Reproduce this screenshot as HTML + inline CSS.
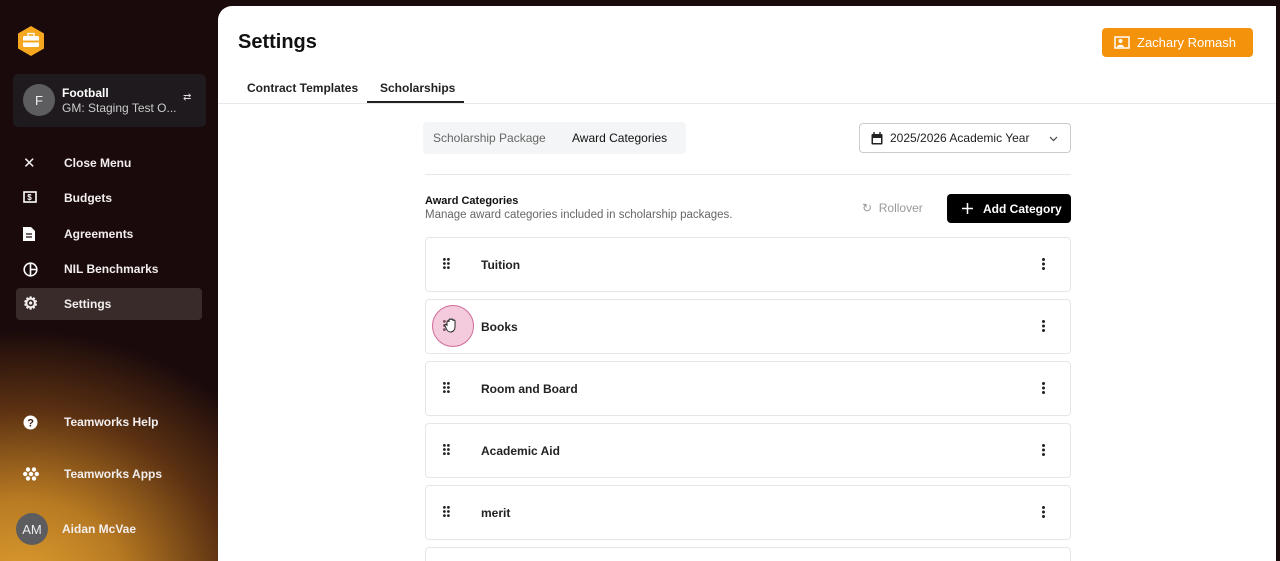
<!DOCTYPE html>
<html style="overflow:hidden;width:1280px;height:561px"><head><style>
*{box-sizing:border-box;margin:0;padding:0}
body{width:1280px;height:561px;overflow:hidden;font-family:"Liberation Sans",sans-serif;background:#1a0a0b;position:relative}
.side{position:absolute;left:0;top:0;width:218px;height:561px;background:radial-gradient(ellipse 300px 260px at 20px 590px,#e0a030 0%,#b87a22 35%,#5a3012 70%,rgba(26,10,11,0) 100%),#1a0a0b;color:#fff}
.logo{position:absolute;left:17px;top:26px}
.team{position:absolute;left:13px;top:74px;width:193px;height:53px;background:#1f1a1d;border-radius:5px}
.av{position:absolute;border-radius:50%;background:#5d5d60;color:#eee;display:flex;align-items:center;justify-content:center}
.nav{position:absolute;left:0;font-size:12px;font-weight:bold;color:#f2eeee}
.nav span.ic{position:absolute;left:23px;width:16px;height:16px}
.nav span.t{position:absolute;left:64px;top:0;white-space:nowrap}
.main{position:absolute;left:218px;top:6px;width:1058px;height:555px;background:#fff;border-radius:14px 0 0 0}
.card{position:absolute;left:425px;width:646px;height:55px;border:1px solid #e6e6e6;border-radius:4px;background:#fff}
.card .t{position:absolute;left:55px;top:20px;font-size:12px;font-weight:bold;color:#222}
.dots{position:absolute;left:17px;top:20px}
.kebab{position:absolute;right:25px;top:20px}
</style></head><body>
<div class="side">
 <svg class="logo" width="28" height="30" viewBox="0 0 28 30"><polygon points="14,0 27,7.5 27,22.5 14,30 1,22.5 1,7.5" fill="#f5a81f"/><rect x="6" y="10" width="16" height="11" rx="1.5" fill="#fff"/><rect x="6" y="14.5" width="16" height="2" fill="#f5a81f"/><rect x="11" y="7.5" width="6" height="3" fill="none" stroke="#fff" stroke-width="1.3"/></svg>
 <div class="team"><div class="av" style="left:10px;top:10px;width:32px;height:32px;font-size:13px">F</div>
  <div style="position:absolute;left:49px;top:12px;font-size:12px;font-weight:bold">Football</div>
  <div style="position:absolute;left:49px;top:27px;font-size:12px;color:#ccc">GM: Staging Test O...</div>
  <div style="position:absolute;left:170px;top:18px;font-size:10px;color:#ddd">⇄</div></div>
 <div class="nav" style="top:156px"><span class="ic" style="top:-2px;font-size:15px;font-weight:normal">✕</span><span class="t">Close Menu</span></div>
 <div class="nav" style="top:191px"><span class="ic"><svg width="14" height="12"><rect x="1" y="1" width="12" height="10" fill="none" stroke="#fff" stroke-width="1.6"/><text x="4.3" y="9.2" font-size="8" fill="#fff" font-family="Liberation Sans">$</text></svg></span><span class="t">Budgets</span></div>
 <div class="nav" style="top:227px"><span class="ic"><svg width="12" height="14"><path d="M0 0h8l4 4v10H0z" fill="#fff"/><path d="M3 7h6M3 10h6" stroke="#1a0a0b" stroke-width="1.3"/></svg></span><span class="t">Agreements</span></div>
 <div class="nav" style="top:262px"><span class="ic"><svg width="15" height="15"><circle cx="7.5" cy="7.5" r="6.3" fill="none" stroke="#fff" stroke-width="1.6"/><path d="M7.5 1v13M7.5 7.5h6" stroke="#fff" stroke-width="1.6"/></svg></span><span class="t">NIL Benchmarks</span></div>
 <div style="position:absolute;left:16px;top:288px;width:186px;height:32px;background:#3a2b2b;border-radius:4px"></div>
 <div class="nav" style="top:297px"><span class="ic" style="top:-3px;font-size:17px">⚙</span><span class="t">Settings</span></div>
 <div class="nav" style="top:415px"><span class="ic"><svg width="15" height="15"><circle cx="7.5" cy="7.5" r="7" fill="#fff"/><text x="4.3" y="11.5" font-size="11" font-weight="bold" fill="#3a2010" font-family="Liberation Sans">?</text></svg></span><span class="t">Teamworks Help</span></div>
 <div class="nav" style="top:467px"><span class="ic"><svg width="16" height="14"><g fill="#fff"><circle cx="5" cy="2.5" r="2.2"/><circle cx="11" cy="2.5" r="2.2"/><circle cx="2.2" cy="7" r="2.2"/><circle cx="8" cy="7" r="2.2"/><circle cx="13.8" cy="7" r="2.2"/><circle cx="5" cy="11.5" r="2.2"/><circle cx="11" cy="11.5" r="2.2"/></g></svg></span><span class="t">Teamworks Apps</span></div>
 <div class="av" style="left:16px;top:513px;width:32px;height:32px;font-size:13px">AM</div>
 <div class="nav" style="top:522px"><span class="t" style="left:62px">Aidan McVae</span></div>
</div>
<div class="main"></div>
<div style="position:absolute;left:238px;top:31px;font-size:20px;font-weight:bold;color:#111">Settings</div>
<div style="position:absolute;left:1102px;top:28px;width:151px;height:29px;background:#f5920c;border-radius:4px;color:#fff;font-size:13px"><svg style="position:absolute;left:12px;top:8px" width="16" height="13"><rect x="1" y="1" width="14" height="11" fill="none" stroke="#fff" stroke-width="1.5"/><circle cx="6.5" cy="5" r="2" fill="#fff"/><path d="M3 11c0-3 7-3 7 0z" fill="#fff"/></svg><span style="position:absolute;left:35px;top:7px">Zachary Romash</span></div>
<div style="position:absolute;left:247px;top:81px;font-size:12px;font-weight:bold;color:#222">Contract Templates</div>
<div style="position:absolute;left:380px;top:81px;font-size:12px;font-weight:bold;color:#222">Scholarships</div>
<div style="position:absolute;left:218px;top:103px;width:1058px;height:1px;background:#e8e8e8"></div>
<div style="position:absolute;left:367px;top:101px;width:97px;height:2px;background:#222"></div>
<div style="position:absolute;left:423px;top:122px;width:263px;height:32px;background:#f4f5f6;border-radius:4px"></div>
<div style="position:absolute;left:433px;top:131px;font-size:12px;color:#666">Scholarship Package</div>
<div style="position:absolute;left:572px;top:131px;font-size:12px;color:#111">Award Categories</div>
<div style="position:absolute;left:859px;top:123px;width:212px;height:30px;border:1px solid #ccc;border-radius:4px;font-size:12px;color:#222"><svg style="position:absolute;left:11px;top:8px" width="12" height="13"><rect x="0.5" y="2" width="11" height="10.5" rx="1" fill="#222"/><rect x="2" y="6" width="8" height="5" fill="#fff"/><path d="M3 0v3M9 0v3" stroke="#222" stroke-width="1.4"/></svg><span style="position:absolute;left:30px;top:7px">2025/2026 Academic Year</span><svg style="position:absolute;left:189px;top:12px" width="9" height="6"><path d="M1 1l3.5 3.5L8 1" fill="none" stroke="#444" stroke-width="1.2"/></svg></div>
<div style="position:absolute;left:425px;top:174px;width:646px;height:1px;background:#e8e8e8"></div>
<div style="position:absolute;left:425px;top:195px;font-size:11px;font-weight:bold;color:#111">Award Categories</div>
<div style="position:absolute;left:425px;top:209px;font-size:11.5px;color:#666">Manage award categories included in scholarship packages.</div>
<div style="position:absolute;left:862px;top:201px;font-size:12px;color:#999">↻ &nbsp;Rollover</div>
<div style="position:absolute;left:947px;top:194px;width:124px;height:29px;background:#000;border-radius:4px;color:#fff;font-size:12px;font-weight:bold"><svg style="position:absolute;left:15px;top:9px" width="11" height="11"><path d="M5.5 0v11M0 5.5h11" stroke="#fff" stroke-width="1.5"/></svg><span style="position:absolute;left:36px;top:8px">Add Category</span></div>
<svg width="0" height="0" style="position:absolute"><defs><g id="d"><circle cx="1.4" cy="1.4" r="1.4"/><circle cx="5.4" cy="1.4" r="1.4"/><circle cx="1.4" cy="5.5" r="1.4"/><circle cx="5.4" cy="5.5" r="1.4"/><circle cx="1.4" cy="9.6" r="1.4"/><circle cx="5.4" cy="9.6" r="1.4"/></g><g id="k"><circle cx="1.5" cy="1.5" r="1.5"/><circle cx="1.5" cy="6" r="1.5"/><circle cx="1.5" cy="10.5" r="1.5"/></g></defs></svg>
<div class="card" style="top:237px"><svg class="dots" width="7" height="11" fill="#222"><use href="#d"/></svg><div class="t">Tuition</div><svg class="kebab" width="3" height="12" fill="#222"><use href="#k"/></svg></div>
<div class="card" style="top:299px"><svg class="dots" width="7" height="11" fill="#222"><use href="#d"/></svg><div class="t">Books</div><svg class="kebab" width="3" height="12" fill="#222"><use href="#k"/></svg></div>
<div class="card" style="top:361px"><svg class="dots" width="7" height="11" fill="#222"><use href="#d"/></svg><div class="t">Room and Board</div><svg class="kebab" width="3" height="12" fill="#222"><use href="#k"/></svg></div>
<div class="card" style="top:423px"><svg class="dots" width="7" height="11" fill="#222"><use href="#d"/></svg><div class="t">Academic Aid</div><svg class="kebab" width="3" height="12" fill="#222"><use href="#k"/></svg></div>
<div class="card" style="top:485px"><svg class="dots" width="7" height="11" fill="#222"><use href="#d"/></svg><div class="t">merit</div><svg class="kebab" width="3" height="12" fill="#222"><use href="#k"/></svg></div>
<div class="card" style="top:547px;height:14px;border-bottom:none;border-radius:4px 4px 0 0"></div>
<div style="position:absolute;left:432px;top:305px;width:42px;height:42px;border-radius:50%;background:rgba(230,140,180,.45);border:1.5px solid #d06a98"></div>
<svg style="position:absolute;left:444px;top:318px" width="14" height="15"><path d="M3 8V4a1 1 0 012 0V2a1 1 0 012 0v0a1 1 0 012 0v1a1 1 0 012 0v6c0 3-2 5-4.5 5S3 12.5 2 10L1 8a1 1 0 012-1z" fill="#fff" stroke="#222" stroke-width="1"/></svg>
</body></html>
